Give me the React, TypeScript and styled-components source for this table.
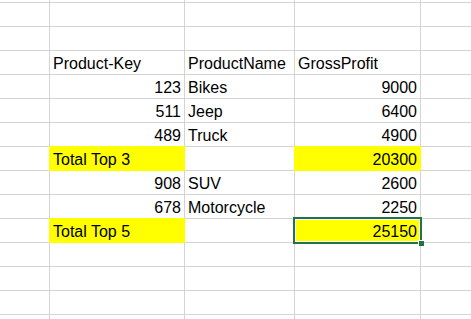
import * as React from 'react';
import styled, { createGlobalStyle } from 'styled-components';

const GlobalStyle = createGlobalStyle`
  html, body {
    margin: 0;
    padding: 0;
    background: #ffffff;
    overflow: hidden;
  }
`;

const Sheet = styled.div`
  display: grid;
  grid-template-columns: 49px 134px 109px 125px 1fr;
  grid-template-rows: 2px repeat(13, 23px) 23px;
  gap: 1px;
  background-color: #d4d4d4;
  width: 471px;
  height: 319px;
  overflow: hidden;
  font-family: "Liberation Sans", Arial, sans-serif;
  font-size: 16px;
  color: #000000;
`;

const Cell = styled.div<{ $align?: 'left' | 'right'; $fill?: boolean; $selected?: boolean }>`
  position: relative;
  background-color: ${(p) => (p.$fill ? '#ffff00' : '#ffffff')};
  box-shadow: ${(p) =>
    p.$selected ? 'inset 0 0 0 1px #ffffff' : p.$fill ? '0 0 0 1px #ffff00' : 'none'};
  text-align: ${(p) => p.$align || 'left'};
  padding: 0 3px;
  line-height: 25px;
  white-space: nowrap;
  z-index: ${(p) => (p.$fill ? 1 : 0)};
`;

// green frame round the active cell
const Selection = styled.span`
  position: absolute;
  inset: -2px;
  border: 2px solid #217346;
  pointer-events: none;
`;

const FillHandle = styled.span`
  position: absolute;
  right: -4px;
  bottom: -4px;
  width: 5px;
  height: 5px;
  background-color: #217346;
  border: 1px solid #ffffff;
  border-right: none;
  border-bottom: none;
`;

type Row = [string, string, string, string?] | null;

const rows: Row[] = [
  null,
  null,
  null,
  ['Product-Key', 'ProductName', 'GrossProfit'],
  ['123', 'Bikes', '9000'],
  ['511', 'Jeep', '6400'],
  ['489', 'Truck', '4900'],
  ['Total Top 3', '', '20300', 'total'],
  ['908', 'SUV', '2600'],
  ['678', 'Motorcycle', '2250'],
  ['Total Top 5', '', '25150', 'selected'],
  null,
  null,
  null,
  null,
];

const isNumber = (s: string) => /^\d+$/.test(s);

const App = () => (
  <>
    <GlobalStyle />
    <Sheet>
      {rows.map((row, i) => {
        if (!row) {
          return [0, 1, 2, 3, 4].map((c) => <Cell key={`${i}-${c}`} />);
        }
        const [key, name, profit, kind] = row;
        const total = kind === 'total' || kind === 'selected';
        return [
          <Cell key={`${i}-a`} />,
          <Cell key={`${i}-b`} $align={isNumber(key) ? 'right' : 'left'} $fill={total}>
            {key}
          </Cell>,
          <Cell key={`${i}-c`}>{name}</Cell>,
          <Cell
            key={`${i}-d`}
            $align={isNumber(profit) ? 'right' : 'left'}
            $fill={total}
            $selected={kind === 'selected'}
          >
            {profit}
            {kind === 'selected' && (
              <Selection>
                <FillHandle />
              </Selection>
            )}
          </Cell>,
          <Cell key={`${i}-e`} />,
        ];
      })}
    </Sheet>
  </>
);

export default App;
